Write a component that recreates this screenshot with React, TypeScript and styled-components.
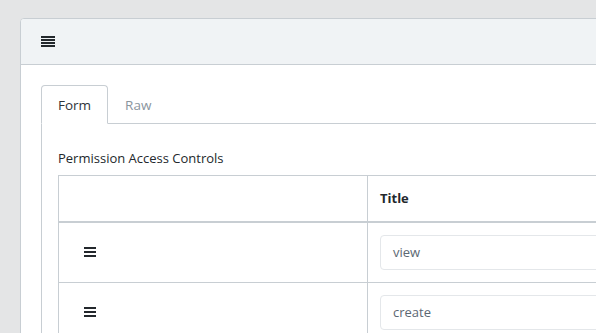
import React from "react";
import styled, { createGlobalStyle } from "styled-components";

const Global = createGlobalStyle`
  html, body { margin: 0; padding: 0; background: #e4e5e6; overflow: hidden; }
  body { font-family: "Open Sans", "Noto Sans", sans-serif; font-size: 13px; color: #23282c; }
  * { box-sizing: border-box; }
`;

const Page = styled.div`
  width: 596px;
  height: 333px;
  padding: 18px 0 0 20px;
  overflow: hidden;
`;

const Card = styled.div`
  width: 720px;
  background: #fff;
  border: 1px solid #c8ced3;
  border-radius: 4px;
  min-height: 400px;
`;

const CardHeader = styled.div`
  height: 46px;
  display: flex;
  align-items: center;
  padding: 0 20px;
  background: #f0f3f5;
  border-bottom: 1px solid #c8ced3;
  border-radius: 3px 3px 0 0;
`;

const CardBody = styled.div`
  padding: 20px 20px;
`;

const TabList = styled.div`
  display: flex;
  border-bottom: 1px solid #c8ced3;
`;

const Tab = styled.div<{ $active?: boolean }>`
  height: 39px;
  padding: 0 16px;
  display: flex;
  align-items: center;
  margin-bottom: -1px;
  border: 1px solid ${(p) => (p.$active ? "#c8ced3" : "transparent")};
  border-bottom-color: ${(p) => (p.$active ? "#fff" : "transparent")};
  border-radius: 4px 4px 0 0;
  background: ${(p) => (p.$active ? "#fff" : "transparent")};
  color: ${(p) => (p.$active ? "#2f353a" : "#8a959e")};
  font-size: 13.5px;
`;

const TabPanel = styled.div`
  border: 1px solid #c8ced3;
  border-top: none;
  padding: 24px 16px 16px;
`;

const Label = styled.div`
  line-height: 20px;
  font-size: 13px;
  margin-bottom: 7px;
`;

const Table = styled.table`
  width: 100%;
  border-collapse: collapse;
  border: 1px solid #c8ced3;
`;

const HeadCell = styled.th<{ $w?: number }>`
  height: 46px;
  text-align: left;
  font-weight: 700;
  font-size: 13px;
  padding: 0 12px;
  border-left: 1px solid #c8ced3;
  border-bottom: 2px solid #c8ced3;
  width: ${(p) => (p.$w ? `${p.$w}px` : "auto")};
`;

const Cell = styled.td`
  padding: 12px;
  border-left: 1px solid #c8ced3;
  border-top: 1px solid #c8ced3;
  vertical-align: middle;
`;

const Handle = styled.span`
  display: inline-flex;
  margin-left: 13px;
  color: #23282c;
`;

const Input = styled.div`
  height: 35px;
  border: 1px solid #e4e7ea;
  border-radius: 4px;
  padding: 0 12px;
  display: flex;
  align-items: center;
  color: #5c6873;
  font-size: 13px;
`;

const HeaderIcon = () => (
  <svg width="14" height="11" viewBox="0 0 14 11" aria-hidden>
    <rect x="0" y="0" width="14" height="2" fill="#23282c" />
    <rect x="0" y="3" width="14" height="2" fill="#23282c" />
    <rect x="0" y="6" width="14" height="2" fill="#23282c" />
    <rect x="0" y="9" width="14" height="2" fill="#23282c" />
  </svg>
);

const BarsIcon = () => (
  <svg width="12" height="10" viewBox="0 0 12 10" aria-hidden>
    <rect x="0" y="0" width="12" height="2" fill="currentColor" />
    <rect x="0" y="4" width="12" height="2" fill="currentColor" />
    <rect x="0" y="8" width="12" height="2" fill="currentColor" />
  </svg>
);

const rows = ["view", "create"];

export default function App() {
  return (
    <>
      <Global />
      <Page>
        <Card>
          <CardHeader>
            <HeaderIcon />
          </CardHeader>
          <CardBody>
            <TabList>
              <Tab $active>Form</Tab>
              <Tab>Raw</Tab>
            </TabList>
            <TabPanel>
              <Label>Permission Access Controls</Label>
              <Table>
                <thead>
                  <tr>
                    <HeadCell $w={309} />
                    <HeadCell>Title</HeadCell>
                  </tr>
                </thead>
                <tbody>
                  {rows.map((r) => (
                    <tr key={r}>
                      <Cell>
                        <Handle>
                          <BarsIcon />
                        </Handle>
                      </Cell>
                      <Cell>
                        <Input>{r}</Input>
                      </Cell>
                    </tr>
                  ))}
                </tbody>
              </Table>
            </TabPanel>
          </CardBody>
        </Card>
      </Page>
    </>
  );
}
